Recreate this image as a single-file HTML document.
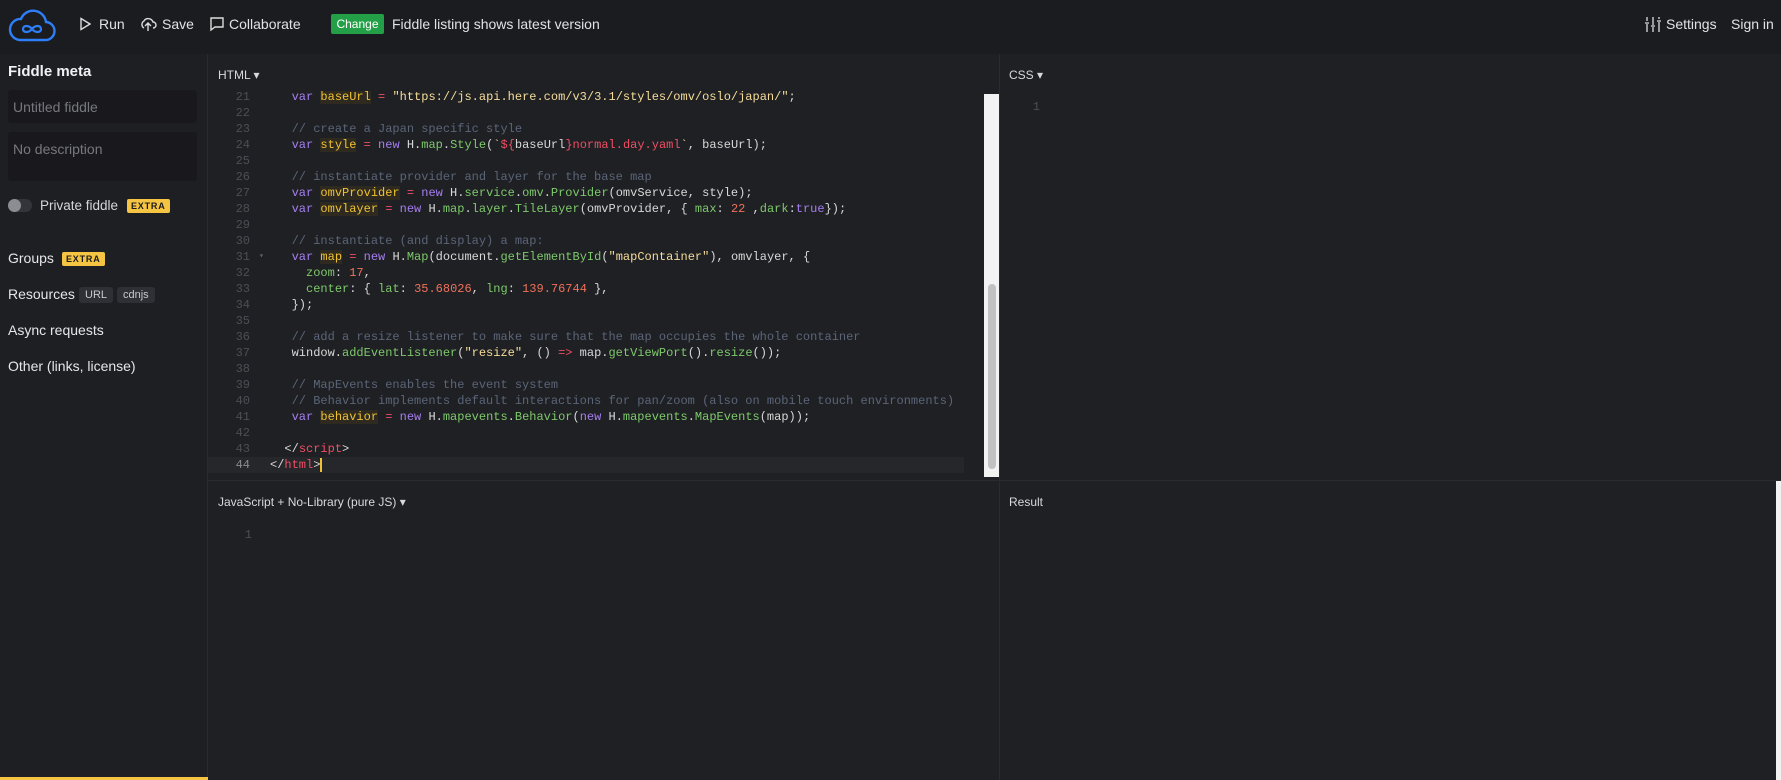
<!DOCTYPE html>
<html><head><meta charset="utf-8"><style>
*{margin:0;padding:0;box-sizing:border-box}
body{width:1781px;height:780px;background:#1f2024;font-family:"Liberation Sans",sans-serif;color:#e4e4e6;position:relative;overflow:hidden}
.a{position:absolute}
#hdr{left:0;top:0;width:1781px;height:54px;background:#1b1c20}
.nav{font-size:14px;color:#e2e2e4;top:16px}
.side{left:0;top:54px;width:208px;height:726px;background:#1e1f23;border-right:1px solid #2a2b30}
.inp{background:#19191d;border-radius:3px;color:#77787d;font-size:14px;padding:9px 5px}
.extra{background:#f5c443;color:#1b1b1b;font-size:9px;font-weight:bold;letter-spacing:.8px;padding:2px 4px;border-radius:2px}
.tag{background:#2f3035;color:#c8c8cc;font-size:11px;padding:2px 6px;border-radius:3px}
.sl{font-size:14px;color:#e6e6e8;left:8px}
.code{font-family:"Liberation Mono",monospace;font-size:12px;white-space:pre;line-height:16px}
.ln{color:#4d4e54;text-align:right;width:30px;left:220px}
.k{color:#a67ef0}.v{color:#f0c233;background:#2e2a1f}.c{color:#5b6578}.s{color:#f5dc9a}.g{color:#7ec96b}.n{color:#f0715b}.r{color:#ef4f63}.t{color:#d8d8d8}
.lbl{font-size:12px;color:#d9d9dc}
#clip{left:208px;top:91px;width:776px;height:386px;overflow:hidden}
</style></head><body>
<div id="hdr" class="a"></div>
<svg class="a" style="left:8px;top:8px" width="48" height="34" viewBox="0 0 48 34"><path d="M12 32 H37 a9 9 0 0 0 1-18 a13 13 0 0 0-25-3 a10.5 10.5 0 0 0-1 21z" fill="none" stroke="#2d7ff9" stroke-width="2.4"/><path d="M24 21 c-3 4-9 4-9 0 c0-4 6-4 9 0 c3 4 9 4 9 0 c0-4-6-4-9 0z" fill="none" stroke="#2d7ff9" stroke-width="2.2"/></svg>
<svg class="a" style="left:79px;top:17px" width="12" height="14"><path d="M2 1.5 L11 7 L2 12.5Z" fill="none" stroke="#ddd" stroke-width="1.4"/></svg>
<div class="a nav" style="left:99px">Run</div>
<svg class="a" style="left:139px;top:16px" width="18" height="16"><path d="M5 12 a4 4 0 0 1 0-7 a5 5 0 0 1 9 1 a3 3 0 0 1 0 6 M9 15 V7 M6 10 l3-3 3 3" fill="none" stroke="#ddd" stroke-width="1.4"/></svg>
<div class="a nav" style="left:162px">Save</div>
<svg class="a" style="left:209px;top:16px" width="16" height="16"><path d="M2 2 H14 V11 H6 L2 14Z" fill="none" stroke="#ddd" stroke-width="1.4"/></svg>
<div class="a nav" style="left:229px">Collaborate</div>
<div class="a" style="left:331px;top:14px;width:53px;height:20px;background:#23a047;border-radius:2px;color:#fff;font-size:12px;line-height:20px;text-align:center">Change</div>
<div class="a nav" style="left:392px">Fiddle listing shows latest version</div>
<svg class="a" style="left:1645px;top:17px" width="16" height="15"><path d="M2 0v4M0 6h4M2 7v8M8 0v8M6 9h4M8 10v5M14 0v2M12 4h4M14 5v10" stroke="#ddd" stroke-width="1.3"/></svg>
<div class="a nav" style="left:1666px">Settings</div>
<div class="a nav" style="left:1731px">Sign in</div>

<div class="a side"></div>
<div class="a" style="left:8px;top:63px;font-size:15px;font-weight:bold;color:#f2f2f4">Fiddle meta</div>
<div class="a inp" style="left:8px;top:90px;width:189px;height:33px">Untitled fiddle</div>
<div class="a inp" style="left:8px;top:132px;width:189px;height:49px">No description</div>
<div class="a" style="left:8px;top:199px;width:24px;height:13px;background:#34353a;border-radius:7px"><div style="width:13px;height:13px;border-radius:7px;background:#8c8d92"></div></div>
<div class="a" style="left:40px;top:198px;font-size:13.5px;color:#d6d6d9">Private fiddle</div>
<div class="a extra" style="left:127px;top:199px">EXTRA</div>
<div class="a sl" style="top:250px">Groups</div><div class="a extra" style="left:62px;top:252px">EXTRA</div>
<div class="a sl" style="top:286px">Resources</div><div class="a tag" style="left:79px;top:287px">URL</div><div class="a tag" style="left:117px;top:287px">cdnjs</div>
<div class="a sl" style="top:322px">Async requests</div>
<div class="a sl" style="top:358px">Other (links, license)</div>
<div class="a" style="left:0;top:777px;width:208px;height:3px;background:#f5c443"></div>

<div class="a" style="left:999px;top:54px;width:1px;height:726px;background:#2a2b30"></div>
<div class="a" style="left:208px;top:480px;width:1573px;height:1px;background:#2a2b30"></div>
<div class="a lbl" style="left:218px;top:68px">HTML ▾</div>
<div class="a lbl" style="left:1009px;top:68px">CSS ▾</div>
<div class="a lbl" style="left:218px;top:495px">JavaScript + No-Library (pure JS) ▾</div>
<div class="a lbl" style="left:1009px;top:495px">Result</div>
<div class="a" style="left:1776px;top:481px;width:5px;height:299px;background:#f2f2f2"></div>
<div class="a" style="left:984px;top:94px;width:15px;height:383px;background:#f2f2f2"></div>
<div class="a" style="left:988px;top:284px;width:8px;height:185px;background:#c1c1c1;border-radius:4px"></div>
<div class="a" id="clip">
<div class="a" style="left:0;top:366px;width:756px;height:16px;background:#26272b"></div>
<div class="a code ln" style="top:-2px;left:12px">21
22
23
24
25
26
27
28
29
30
31
32
33
34
35
36
37
38
39
40
41
42
43
<span style="color:#8a8b90">44</span></div>
<div class="a code" style="left:51px;top:158px;color:#666;font-size:8px">▾</div>
<div class="a code t" style="left:62px;top:-2px">   <span class="k">var</span> <span class="v">baseUrl</span> <span class="r">=</span> <span class="s">"https://js.api.here.com/v3/3.1/styles/omv/oslo/japan/"</span>;

   <span class="c">// create a Japan specific style</span>
   <span class="k">var</span> <span class="v">style</span> <span class="r">=</span> <span class="k">new</span> H.<span class="g">map</span>.<span class="g">Style</span>(<span class="s">`</span><span class="r">${</span>baseUrl<span class="r">}normal.day.yaml</span><span class="s">`</span>, baseUrl);

   <span class="c">// instantiate provider and layer for the base map</span>
   <span class="k">var</span> <span class="v">omvProvider</span> <span class="r">=</span> <span class="k">new</span> H.<span class="g">service</span>.<span class="g">omv</span>.<span class="g">Provider</span>(omvService, style);
   <span class="k">var</span> <span class="v">omvlayer</span> <span class="r">=</span> <span class="k">new</span> H.<span class="g">map</span>.<span class="g">layer</span>.<span class="g">TileLayer</span>(omvProvider, { <span class="g">max</span>: <span class="n">22</span> ,<span class="g">dark</span>:<span class="k">true</span>});

   <span class="c">// instantiate (and display) a map:</span>
   <span class="k">var</span> <span class="v">map</span> <span class="r">=</span> <span class="k">new</span> H.<span class="g">Map</span>(document.<span class="g">getElementById</span>(<span class="s">"mapContainer"</span>), omvlayer, {
     <span class="g">zoom</span>: <span class="n">17</span>,
     <span class="g">center</span>: { <span class="g">lat</span>: <span class="n">35.68026</span>, <span class="g">lng</span>: <span class="n">139.76744</span> },
   });

   <span class="c">// add a resize listener to make sure that the map occupies the whole container</span>
   window.<span class="g">addEventListener</span>(<span class="s">"resize"</span>, () <span class="r">=&gt;</span> map.<span class="g">getViewPort</span>().<span class="g">resize</span>());

   <span class="c">// MapEvents enables the event system</span>
   <span class="c">// Behavior implements default interactions for pan/zoom (also on mobile touch environments)</span>
   <span class="k">var</span> <span class="v">behavior</span> <span class="r">=</span> <span class="k">new</span> H.<span class="g">mapevents</span>.<span class="g">Behavior</span>(<span class="k">new</span> H.<span class="g">mapevents</span>.<span class="g">MapEvents</span>(map));

  &lt;/<span class="r">script</span>&gt;
&lt;/<span class="r">html</span>&gt;<span style="border-left:2px solid #f0c233"></span></div>
</div>
<div class="a code ln" style="top:99px;left:1010px;width:30px">1</div>
<div class="a code ln" style="top:527px;left:222px;width:30px">1</div>
</body></html>
